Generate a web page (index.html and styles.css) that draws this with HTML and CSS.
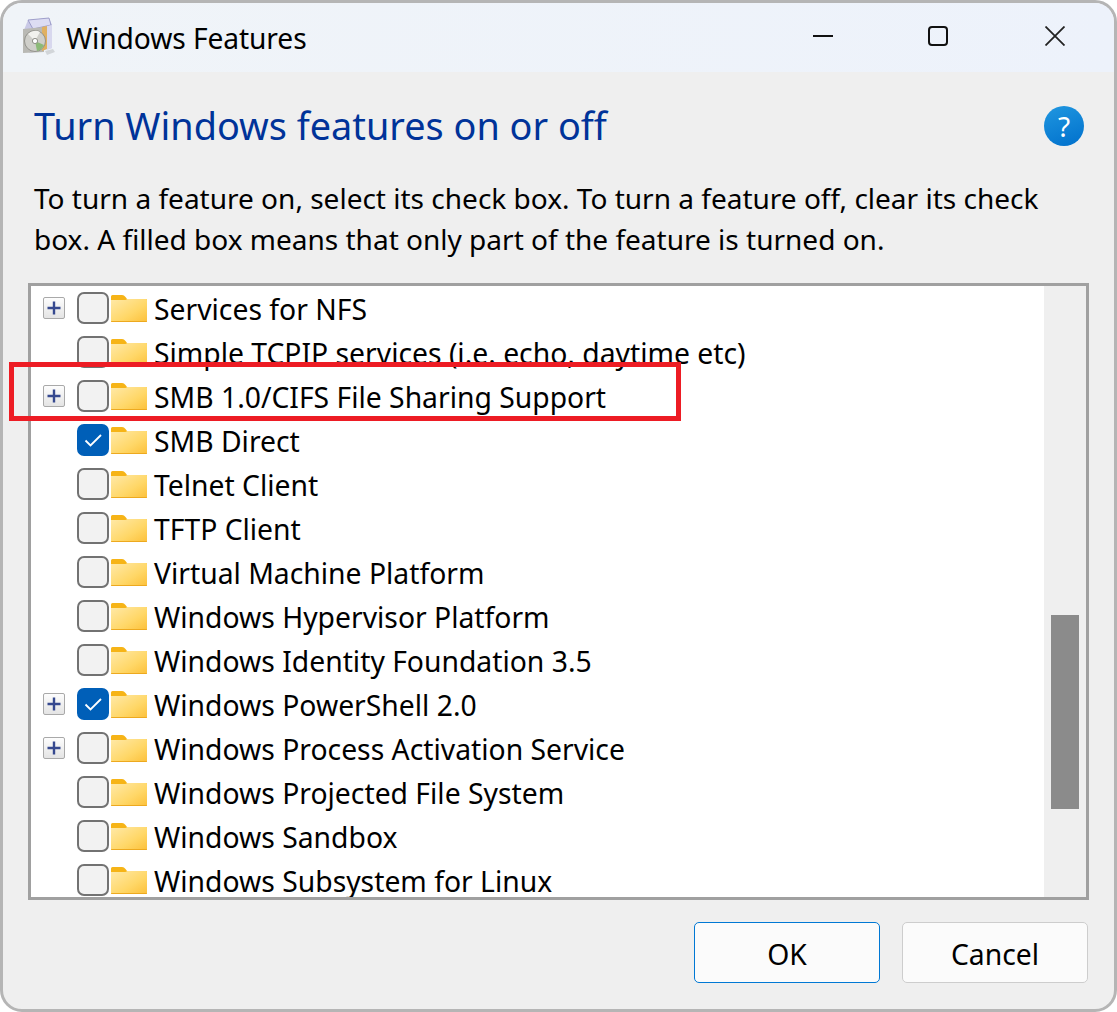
FILE: index.html
```html
<!DOCTYPE html>
<html lang="en">
<head>
<meta charset="utf-8">
<title>Windows Features</title>
<link rel="stylesheet" href="styles.css">
</head>
<body>
<svg class="defs" width="0" height="0" aria-hidden="true">
  <defs>
    <linearGradient id="fg" x1="0" y1="0" x2="1" y2="1">
      <stop offset="0" stop-color="#ffe9a8"/>
      <stop offset="0.6" stop-color="#ffd767"/>
      <stop offset="1" stop-color="#fcc03a"/>
    </linearGradient>
    <symbol id="folder" viewBox="0 0 36 28">
      <path d="M0 2.5A1.5 1.5 0 0 1 1.5 1H11c1.5 0 2.5.7 3.5 2L16 5H36V6H0Z" fill="#f6b417"/>
      <path d="M0 6H14.5L16.5 5H35.5a.5.5 0 0 1 .5.5V27a1 1 0 0 1-1 1H1a1 1 0 0 1-1-1Z" fill="url(#fg)"/>
      <path d="M0 27H36V27.3a.7.7 0 0 1-.7.7H.7a.7.7 0 0 1-.7-.7Z" fill="#eda91f"/>
    </symbol>
    <symbol id="plus" viewBox="0 0 22 22">
      <path d="M11 4.5V17.5M4.5 11H17.5" stroke="#36498f" stroke-width="2.4" fill="none"/>
    </symbol>
    <symbol id="tick" viewBox="0 0 32 32">
      <path d="M8.5 16.5L13.5 21.5L24 11" stroke="#fff" stroke-width="1.8" fill="none"/>
    </symbol>
  </defs>
</svg>
<main class="window">
  <header class="titlebar">
    <svg class="app-icon" width="36" height="38" viewBox="0 0 36 38">
      <path d="M8 3L29 1L32 8V31L10 36L4 32V13Z" fill="#c9c9e6"/>
      <path d="M8 3L13 12L31 8L29 1Z" fill="#dcdcf2" stroke="#8f8fc0" stroke-width=".8"/>
      <path d="M3 12L24 10V35L3 36Z" fill="#b9b9b4"/>
      <path d="M22 10L27 9V32L22 34Z" fill="#e0b060"/>
      <path d="M27 9L32 8V31L27 33Z" fill="#d8d8ee"/>
      <circle cx="15" cy="24" r="10.5" fill="#cfcfca" stroke="#85857f" stroke-width=".8"/>
      <path d="M15 24L8 17A10 10 0 0 1 20 15Z" fill="#f2f2ee"/>
      <path d="M15 24L24 28A10 10 0 0 1 17 34Z" fill="#8cba78"/>
      <circle cx="15" cy="24" r="2.6" fill="#fff" stroke="#77776f" stroke-width=".8"/>
      <path d="M25 34L33 32L35 35L27 38Z" fill="#000" opacity=".12"/>
    </svg>
    <h1 class="window-title">Windows Features</h1>
    <div class="window-controls">
      <button class="control" aria-label="Minimize"><svg width="20" height="20" viewBox="0 0 20 20"><path d="M0 10H20" stroke="#111" stroke-width="2"/></svg></button>
      <button class="control" aria-label="Maximize"><svg width="20" height="20" viewBox="0 0 20 20"><rect x="1" y="1" width="18" height="18" rx="3" stroke="#111" stroke-width="2" fill="none"/></svg></button>
      <button class="control control-close" aria-label="Close"><svg width="20" height="20" viewBox="0 0 20 20"><path d="M.5 .5L19.5 19.5M19.5 .5L.5 19.5" stroke="#222" stroke-width="1.8" fill="none"/></svg></button>
    </div>
  </header>
  <section class="content">
    <div class="heading-row">
      <h2 class="heading">Turn Windows features on or off</h2>
      <div class="help">?</div>
    </div>
    <p class="intro">To turn a feature on, select its check box. To turn a feature off, clear its check box. A filled box means that only part of the feature is turned on.</p>
    <div class="listbox">
      <ul class="rows">
        <li class="row"><span class="expander"><svg width="22" height="22"><use href="#plus"/></svg></span><span class="check"></span><svg class="folder"><use href="#folder"/></svg><span class="label">Services for NFS</span></li>
        <li class="row"><span class="spacer"></span><span class="check"></span><svg class="folder"><use href="#folder"/></svg><span class="label">Simple TCPIP services (i.e. echo, daytime etc)</span></li>
        <li class="row"><span class="expander"><svg width="22" height="22"><use href="#plus"/></svg></span><span class="check"></span><svg class="folder"><use href="#folder"/></svg><span class="label">SMB 1.0/CIFS File Sharing Support</span></li>
        <li class="row"><span class="spacer"></span><span class="check on"><svg width="32" height="32"><use href="#tick"/></svg></span><svg class="folder"><use href="#folder"/></svg><span class="label">SMB Direct</span></li>
        <li class="row"><span class="spacer"></span><span class="check"></span><svg class="folder"><use href="#folder"/></svg><span class="label">Telnet Client</span></li>
        <li class="row"><span class="spacer"></span><span class="check"></span><svg class="folder"><use href="#folder"/></svg><span class="label">TFTP Client</span></li>
        <li class="row"><span class="spacer"></span><span class="check"></span><svg class="folder"><use href="#folder"/></svg><span class="label">Virtual Machine Platform</span></li>
        <li class="row"><span class="spacer"></span><span class="check"></span><svg class="folder"><use href="#folder"/></svg><span class="label">Windows Hypervisor Platform</span></li>
        <li class="row"><span class="spacer"></span><span class="check"></span><svg class="folder"><use href="#folder"/></svg><span class="label">Windows Identity Foundation 3.5</span></li>
        <li class="row"><span class="expander"><svg width="22" height="22"><use href="#plus"/></svg></span><span class="check on"><svg width="32" height="32"><use href="#tick"/></svg></span><svg class="folder"><use href="#folder"/></svg><span class="label">Windows PowerShell 2.0</span></li>
        <li class="row"><span class="expander"><svg width="22" height="22"><use href="#plus"/></svg></span><span class="check"></span><svg class="folder"><use href="#folder"/></svg><span class="label">Windows Process Activation Service</span></li>
        <li class="row"><span class="spacer"></span><span class="check"></span><svg class="folder"><use href="#folder"/></svg><span class="label">Windows Projected File System</span></li>
        <li class="row"><span class="spacer"></span><span class="check"></span><svg class="folder"><use href="#folder"/></svg><span class="label">Windows Sandbox</span></li>
        <li class="row"><span class="spacer"></span><span class="check"></span><svg class="folder"><use href="#folder"/></svg><span class="label">Windows Subsystem for Linux</span></li>
      </ul>
      <div class="scrollbar"><div class="thumb"></div></div>
    </div>
    <div class="actions">
      <button class="btn btn-default">OK</button>
      <button class="btn">Cancel</button>
    </div>
  </section>
  <div class="highlight"></div>
</main>
</body>
</html>
```
FILE: styles.css
```css
* { box-sizing: border-box; }
html, body { margin: 0; padding: 0; background: #fff; }
body { width: 1117px; height: 1012px; overflow: hidden; font-family: "Noto Sans", "Open Sans", sans-serif; color: #000; }
.defs { position: absolute; }
.window {
  position: relative;
  width: 1117px;
  height: 1012px;
  border: 3px solid #b5b5b5;
  border-radius: 22px;
  overflow: hidden;
  background: #efefef;
  display: flex;
  flex-direction: column;
}
.titlebar {
  height: 69px;
  flex: none;
  background: linear-gradient(90deg, #f0f4f8, #edf2fb);
  display: flex;
  align-items: center;
  padding-left: 17px;
}
.app-icon { flex: none; margin-top: -4px; }
.window-title { margin: 0 0 0 10px; font-size: 28.2px; font-weight: 400; flex: 1; letter-spacing: -0.1px; }
.window-controls { display: flex; gap: 95px; padding-right: 49px; margin-top: -3px; }
.control { border: 0; padding: 0; background: none; width: 20px; height: 20px; display: block; }
.control-close { margin-left: 2px; }
.control svg { display: block; }
.content { flex: 1; display: flex; flex-direction: column; padding: 0 25px 0 25px; min-height: 0; }
.heading-row { display: flex; justify-content: space-between; align-items: center; padding: 29px 5px 0 6px; height: 79px; }
.heading { margin: 0; font-size: 37.85px; line-height: 50px; font-weight: 400; color: #003399; }
.help {
  width: 40px; height: 40px; border-radius: 50%;
  background: linear-gradient(160deg, #2097e0, #0070cc);
  color: #fff; font-size: 28px; line-height: 40px; text-align: center;
}
.intro { margin: 0; padding: 27px 0 0 6px; font-size: 28.02px; line-height: 41px; height: 132px; width: 1040px; }
.listbox {
  height: 617px;
  border: 3px solid #a0a0a0;
  background: #fff;
  display: flex;
  overflow: hidden;
  flex: none;
}
.rows { list-style: none; margin: 0; padding: 0; flex: 1; min-width: 0; }
.row { height: 44px; display: flex; align-items: center; padding-left: 12px; }
.expander {
  width: 22px; height: 22px; flex: none;
  border: 1px solid #a9a9a9;
  border-radius: 2px;
  background: linear-gradient(180deg, #fdfdfd, #e4e4e4);
  position: relative;
}
.expander svg { position: absolute; left: -1px; top: -1px; }
.spacer { width: 22px; flex: none; }
.check {
  width: 32px; height: 32px; flex: none; margin-left: 12px;
  border: 2px solid #727272;
  border-radius: 7px;
  background: #f2f2f2;
  position: relative;
}
.check.on { background: #005fb8; border-color: #005fb8; }
.check svg { position: absolute; left: -2px; top: -2px; }
.folder { width: 36px; height: 28px; flex: none; margin-left: 2px; }
.label { margin-left: 7px; font-size: 28.3px; white-space: nowrap; line-height: 44px; position: relative; top: 1px; }
.scrollbar { width: 42px; flex: none; background: #efefef; padding: 329px 7px 0; }
.thumb { height: 194px; background: #8b8b8b; }
.actions { display: flex; justify-content: flex-end; gap: 22px; padding: 22px 0 0; margin-right: 1px; }
.btn {
  width: 186px; height: 61px;
  border: 1px solid #cdcdcd;
  border-radius: 5px;
  background: #fbfbfb;
  font: inherit;
  font-size: 28.3px;
  color: #000;
  padding: 2px 0 0;
}
.btn-default { border: 1px solid #0078d4; }
.highlight {
  position: absolute;
  left: 6px; top: 359px;
  width: 672px; height: 59px;
  border: 5px solid #ed1c24;
}
```
